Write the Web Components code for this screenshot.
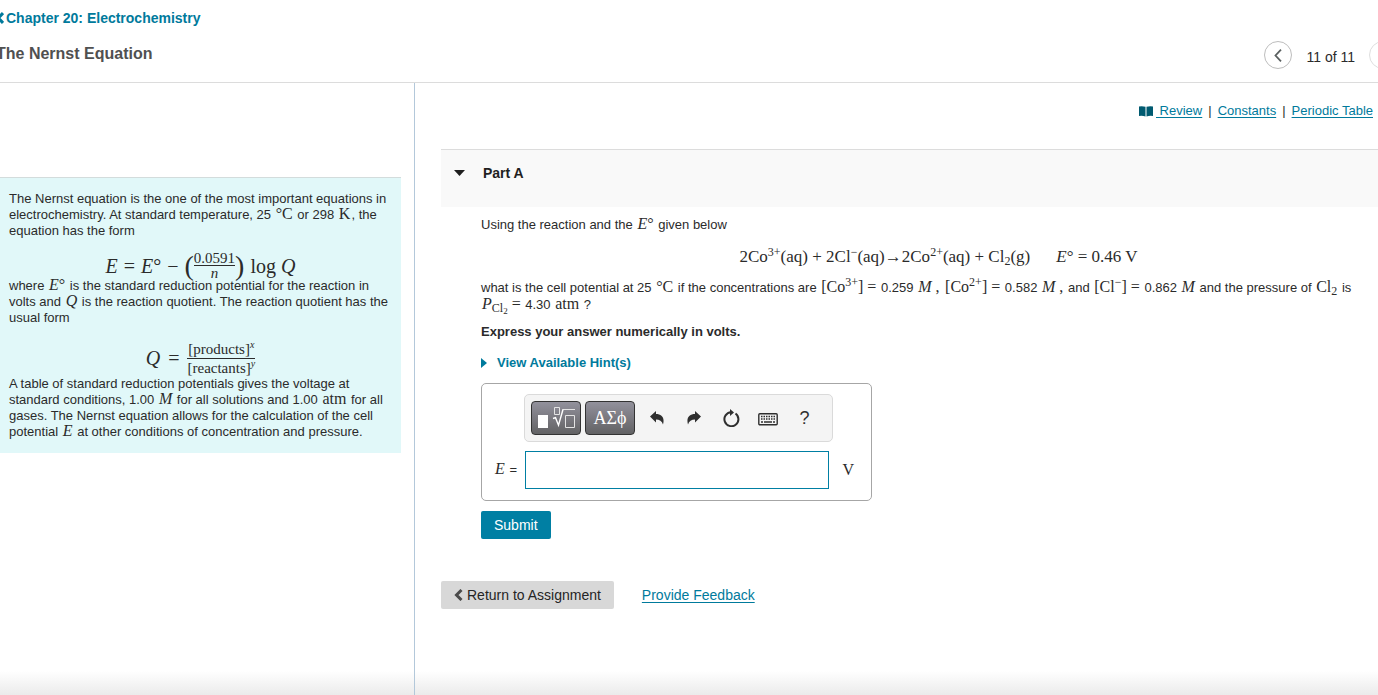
<!DOCTYPE html>
<html lang="en">
<head>
<meta charset="utf-8">
<title>The Nernst Equation</title>
<style>
  html {
    overflow-x: hidden;
  }
  body {
    margin: 0;
    font-family: "Liberation Sans", Arial, sans-serif;
    font-size: 13px;
    line-height: 16px;
    color: #2b2b2b;
    --accent: #007fa3;
    --link: #007a9c;
    --rule: #dcdcdc;
    --serif: "Liberation Serif", "Times New Roman", serif;
  }
</style>
</head>
<body>
<course-item></course-item>

<script>
function define(name, html) {
  const template = document.createElement('template');
  // trimmed, so that inline elements get no stray space at their ends
  template.innerHTML = html.trim();
  window.customElements.define(name, class extends HTMLElement {
    constructor() {
      super();
      this.attachShadow({ mode: 'open' });
      this.shadowRoot.appendChild(template.content.cloneNode(true));
    }
  });
}

// inline math, shared by every element that holds running text
const mathStyles = `
  sup, sub {
    font-size: 12px;
    line-height: 0;
  }
  sup {
    vertical-align: 6px;
  }
  sub {
    vertical-align: -3px;
  }
  sub sub {
    font-size: 9px;
    vertical-align: -2px;
  }
  p {
    margin: 0;
  }
`;

define('math-text', `
  <style>
    :host {
      margin: 0 1px;
      font-family: var(--serif);
      font-size: 16px;
      line-height: 0;
      white-space: nowrap;
    }
  </style><slot></slot>
`);

define('math-fraction', `
  <style>
    :host {
      display: inline-grid;
      justify-items: center;
      vertical-align: middle;
      font-size: 15px;
      line-height: var(--row, 14px);
    }
    .bar {
      justify-self: stretch;
      height: 1px;
      background: currentColor;
    }
  </style>
  <slot name="top"></slot>
  <span class="bar"></span>
  <slot name="bottom"></slot>
`);

define('math-display', `
  <style>
    :host {
      display: flex;
      align-items: center;
      justify-content: center;
      gap: 6px;
      font-family: var(--serif);
      font-size: 20px;
      white-space: nowrap;
    }
  </style>
  <slot></slot>
`);

define('item-header', `
  <style>
    :host {
      display: flex;
      justify-content: space-between;
      height: 82px;
      margin: 0 -19px 0 -4px;
      border-bottom: 1px solid var(--rule);
    }
    .titles {
      display: flex;
      flex-direction: column;
      gap: 18px;
      padding-top: 9px;
    }
    a {
      display: flex;
      align-items: center;
      gap: 2px;
      color: var(--link);
      font-size: 14px;
      font-weight: bold;
      line-height: 18px;
      text-decoration: none;
    }
    h1 {
      margin: 0;
      color: #505050;
      font-size: 16px;
      line-height: 18px;
    }
    nav {
      display: flex;
      align-items: center;
      align-self: flex-start;
      gap: 14px;
      padding-top: 41px;
      font-size: 14px;
    }
    nav span {
      padding-top: 4px;
    }
    button {
      display: grid;
      place-items: center;
      width: 28px;
      height: 28px;
      padding: 0;
      border: 1px solid #bdbdbd;
      border-radius: 50%;
      background: #fff;
    }
    button:disabled {
      border-color: #dedede;
    }
  </style>
  <div class="titles">
    <a href="#"><svg width="8" height="12" viewBox="0 0 8 12" fill="none" stroke="currentColor" stroke-width="3"><path d="M7 1 2.500 6 7 11"/></svg>Chapter 20: Electrochemistry</a>
    <h1>The Nernst Equation</h1>
  </div>
  <nav aria-label="Items">
    <button aria-label="Previous item"><svg width="8" height="13" viewBox="0 0 8 13" fill="none" stroke="#5a6060" stroke-width="1.800"><path d="M7 .7 1.500 6.500 7 12.300"/></svg></button>
    <span>11 of 11</span>
    <button aria-label="Next item" disabled></button>
  </nav>
`);

define('intro-panel', `
  <style>
    ${mathStyles}
    :host {
      display: block;
      padding: 13px 9px;
      border-top: 1px solid #d3dcdc;
      background: #e1f8f9;
    }
    math-display {
      padding-top: 14px;
    }
    .nernst {
      height: 25px;
    }
    .quotient {
      gap: 8px;
      height: 36px;
      --row: 18px;
    }
    .quotient sup {
      font-size: 10px;
    }
    .paren {
      font-size: 28px;
    }
    .group {
      display: flex;
      align-items: center;
    }
  </style>
  <p>The Nernst equation is the one of the most important equations in electrochemistry. At standard temperature, 25 <math-text>°C</math-text> or 298 <math-text>K</math-text>, the equation has the form</p>
  <math-display class="nernst">
    <i>E</i><span>=</span><span><i>E</i>°</span><span>−</span>
    <span class="group"><span class="paren">(</span><math-fraction><span slot="top">0.0591</span><i slot="bottom">n</i></math-fraction><span class="paren">)</span></span>
    <span>log <i>Q</i></span>
  </math-display>
  <p>where <math-text><i>E</i>°</math-text> is the standard reduction potential for the reaction in volts and <math-text><i>Q</i></math-text> is the reaction quotient. The reaction quotient has the usual form</p>
  <math-display class="quotient">
    <i>Q</i><span>=</span>
    <math-fraction><span slot="top">[products]<sup><i>x</i></sup></span><span slot="bottom">[reactants]<sup><i>y</i></sup></span></math-fraction>
  </math-display>
  <p>A table of standard reduction potentials gives the voltage at standard conditions, 1.00 <math-text><i>M</i></math-text> for all solutions and 1.00 <math-text>atm</math-text> for all gases. The Nernst equation allows for the calculation of the cell potential <math-text><i>E</i></math-text> at other conditions of concentration and pressure.</p>
`);

define('resource-links', `
  <style>
    :host {
      display: flex;
      align-items: center;
      justify-content: flex-end;
      gap: 6px;
      padding-right: 5px;
    }
    a {
      color: var(--link);
      white-space: pre;
      text-underline-offset: 2px;
    }
    svg {
      margin-right: -3px;
    }
  </style>
  <svg width="14" height="11" viewBox="0 0 14 11" fill="#005a70"><path d="M0 .5Q3.500 0 6.500 .8v9.700Q3.500 9.500 0 10zM7.500 .8Q10.500 0 14 .5V10Q10.500 9.500 7.500 10.500z"/></svg>
  <a href="#"> Review</a><span>|</span><a href="#">Constants</a><span>|</span><a href="#">Periodic Table</a>
`);

define('part-section', `
  <style>
    :host {
      display: block;
    }
    header {
      height: 57px;
      border-top: 1px solid var(--rule);
      background: #f9f9f9;
    }
    h2 {
      margin: 0;
      font-size: 14px;
    }
    button {
      display: flex;
      align-items: center;
      gap: 18px;
      padding: 15px 13px;
      border: 0;
      background: none;
      color: #1f1f1f;
      font: inherit;
    }
    .body {
      padding: 10px 0 0 40px;
    }
  </style>
  <header>
    <h2><button aria-expanded="true"><svg width="11" height="6" viewBox="0 0 11 6"><path d="M0 0h11L5.500 6z" fill="#1f1f1f"/></svg><slot name="title"></slot></button></h2>
  </header>
  <div class="body"><slot></slot></div>
`);

define('problem-text', `
  <style>
    ${mathStyles}
    :host {
      display: block;
    }
    math-display {
      gap: 26px;
      padding: 16px 0 14px 18px;
      font-size: 17px;
    }
    .question {
      line-height: 17px;
    }
    .instruction {
      padding: 11px 0 15px;
      font-weight: bold;
    }
    button {
      display: flex;
      align-items: center;
      gap: 10px;
      padding: 0;
      border: 0;
      background: none;
      color: var(--link);
      font: inherit;
      font-weight: bold;
    }
  </style>
  <p>Using the reaction and the <math-text><i>E</i>°</math-text> given below</p>
  <math-display>
    <span>2Co<sup>3+</sup>(aq) + 2Cl<sup>−</sup>(aq)→2Co<sup>2+</sup>(aq) + Cl<sub>2</sub>(g)</span>
    <span><i>E</i>° = 0.46 V</span>
  </math-display>
  <p class="question">what is the cell potential at 25 <math-text>°C</math-text> if the concentrations are <math-text>[Co<sup>3+</sup>] =</math-text> 0.259 <math-text><i>M</i> ,</math-text> <math-text>[Co<sup>2+</sup>] =</math-text> 0.582 <math-text><i>M</i> ,</math-text> and <math-text>[Cl<sup>−</sup>] =</math-text> 0.862 <math-text><i>M</i></math-text> and the pressure of <math-text>Cl<sub>2</sub></math-text> is <math-text><i>P</i><sub>Cl<sub>2</sub></sub> =</math-text> 4.30 <math-text>atm</math-text> ?</p>
  <p class="instruction">Express your answer numerically in volts.</p>
  <button aria-expanded="false"><svg width="6" height="10" viewBox="0 0 6 10"><path d="M0 0v10l6-5z" fill="currentColor"/></svg>View Available Hint(s)</button>
`);

define('math-toolbar', `
  <style>
    :host {
      display: flex;
      align-items: center;
      box-sizing: border-box;
      height: 48px;
      padding: 0 6px;
      border: 1px solid #dadada;
      border-radius: 5px;
      background: #f4f4f4;
    }
    button {
      display: grid;
      place-items: center;
      width: 37px;
      height: 34px;
      padding: 0;
      border: 0;
      background: none;
      color: #2f2f2f;
      font-family: inherit;
      font-size: 18px;
    }
    .palette {
      width: 50px;
      margin-right: 4px;
      border: 1px solid #333;
      border-radius: 4px;
      background: linear-gradient(#92919c, #626264);
      color: #fff;
      font-family: var(--serif);
    }
    .palette + .palette {
      margin-right: 3px;
    }
  </style>
  <button class="palette" aria-label="Templates">
    <svg width="38" height="24" viewBox="0 0 38 24" fill="none" stroke="#fff">
      <path d="M1 9h10v13H1z" fill="#fff" stroke="none"/>
      <path d="M17.500 1.500h5v7h-5zM28.500 9.500h9v12h-9z" stroke="#e4e4e4"/>
      <path d="M25.500 3.500H38" stroke="#e4e4e4"/>
      <path d="M16 12.500l2.500-.8 3 7.500 4.500-15.700" stroke-width="1.400"/>
    </svg>
  </button>
  <button class="palette" aria-label="Symbols">ΑΣϕ</button>
  <button aria-label="Undo"><svg width="14" height="14" viewBox="0 0 14 14" fill="currentColor"><path d="M0 5.500 6 0v3c5.500 0 9 3.500 7 10.500C12 10 9.500 8.500 6 8.500v3z"/></svg></button>
  <button aria-label="Redo"><svg width="14" height="14" viewBox="0 0 14 14" fill="currentColor"><path d="M14 5.500 8 0v3C2.500 3-1 6.500 1 13.500 2 10 4.500 8.500 8 8.500v3z"/></svg></button>
  <button aria-label="Reset"><svg width="18" height="18" viewBox="0 0 18 18"><path d="M13.500 4.500A7 7 0 1 1 9 3.200" fill="none" stroke="currentColor" stroke-width="2"/><path d="M8 0v7L12 3.500z" fill="currentColor"/></svg></button>
  <button aria-label="Keyboard shortcuts"><svg width="20" height="16" viewBox="0 0 20 16" fill="none" stroke="currentColor"><rect x=".8" y="3.800" width="18.400" height="11" rx="1" stroke-width="1.400"/><path d="M3 6.500h14M3 9h14" stroke-width="1.400" stroke-dasharray="1.500 1"/><path d="M3 12h2M6 12h8M15 12h2" stroke-width="1.500"/></svg></button>
  <button aria-label="Help">?</button>
`);

define('answer-box', `
  <style>
    :host {
      display: grid;
      grid-template-columns: auto 1fr auto;
      align-items: center;
      gap: 9px 0;
      box-sizing: border-box;
      max-width: 391px;
      margin: 12px 0 10px;
      padding: 10px 16px 11px 12px;
      border: 1px solid #a6a6a6;
      border-radius: 5px;
    }
    math-toolbar {
      grid-column: 2;
      margin-right: 8px;
    }
    label {
      grid-column: 1;
      width: 30px;
    }
    input {
      box-sizing: border-box;
      min-width: 0;
      height: 38px;
      margin: 0 12px 0 1px;
      border: 1px solid var(--accent);
      border-radius: 0;
      background: #fff;
      font-size: 16px;
    }
  </style>
  <math-toolbar></math-toolbar>
  <label for="answer"><math-text><i>E</i></math-text> =</label>
  <input id="answer" type="text">
  <math-text>V</math-text>
`);

define('item-actions', `
  <style>
    :host {
      display: flex;
      align-items: center;
      gap: 28px;
      padding-top: 42px;
      font-size: 14px;
    }
    button {
      display: flex;
      align-items: center;
      gap: 4px;
      height: 28px;
      padding: 0 13px;
      border: 0;
      border-radius: 2px;
      background: #d8d8d8;
      color: #252525;
      font: inherit;
    }
    a {
      color: var(--link);
      text-underline-offset: 2px;
    }
  </style>
  <button><svg width="9" height="12" viewBox="0 0 9 12" fill="none" stroke="#4b4b4b" stroke-width="3"><path d="M7.500 1 2.500 6l5 5"/></svg>Return to Assignment</button>
  <a href="#">Provide Feedback</a>
`);

define('course-item', `
  <style>
    :host {
      display: flex;
      flex-direction: column;
      min-height: 100vh;
      overflow: hidden;
      background: linear-gradient(#fff0, #ebebeb) bottom / 100% 24px no-repeat;
    }
    .columns {
      display: grid;
      grid-template-columns: 414px minmax(0, 1fr);
      flex: 1;
    }
    aside {
      padding: 94px 13px 0 0;
    }
    main {
      padding: 20px 0 0 26px;
      border-left: 1px solid #b3c8da;
    }
    resource-links {
      margin-bottom: 30px;
    }
    .submit {
      display: block;
      height: 28px;
      padding: 0 13px;
      border: 0;
      border-radius: 2px;
      background: var(--accent);
      color: #fff;
      font-family: inherit;
      font-size: 14px;
    }
  </style>
  <item-header></item-header>
  <div class="columns">
    <aside><intro-panel></intro-panel></aside>
    <main>
      <resource-links></resource-links>
      <part-section>
        <span slot="title">Part A</span>
        <problem-text></problem-text>
        <answer-box></answer-box>
        <button class="submit">Submit</button>
      </part-section>
      <item-actions></item-actions>
    </main>
  </div>
`);
</script>
</body>
</html>
